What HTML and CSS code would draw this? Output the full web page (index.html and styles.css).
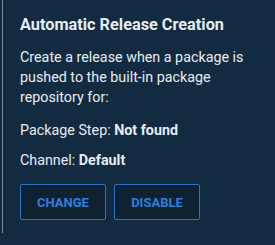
FILE: index.html
```html
<!DOCTYPE html>
<html>
    <head>
        <title>Automatic Release Creation</title>
        <link rel="stylesheet" href="styles.css">
    </head>
    <body>
        <div class="panel">
            <h3 class="title">Automatic Release Creation</h3>
            <p class="intro">Create a release when a package is pushed to the built-in package repository for:</p>
            <p>Package Step: <strong>Not found</strong></p>
            <p class="last">Channel: <strong>Default</strong></p>
            <div class="actions">
                <button class="button">Change</button>
                <button class="button">Disable</button>
            </div>
        </div>
    </body>
</html>
```

FILE: styles.css
```css
html, body {
    margin: 0;
    background: #132b40;
}
body {
    font-family: Roboto, "Liberation Sans", sans-serif;
    color: #e6edf3;
    font-size: 14.3px;
    line-height: 20px;
    padding-left: 2px;
}
.panel {
    border-left: 1px solid #7a8896;
    height: 233px;
    box-sizing: border-box;
    padding: 13px 8px 0 17px;
    width: 262px;
}
.title {
    font-size: 16.3px;
    font-weight: bold;
    line-height: 24px;
    margin: 0 0 10px;
}
p {
    margin: 0 0 10px;
}
.intro {
    margin-bottom: 13px;
}
.last {
    margin-bottom: 14px;
}
strong {
    font-weight: bold;
}
.actions {
    display: flex;
    gap: 8px;
}
.button {
    width: 86px;
    height: 36px;
    background: #0f2232;
    border: 1px solid #2a73c8;
    border-radius: 2px;
    color: #2f80dc;
    font-family: Roboto, "Liberation Sans", sans-serif;
    font-size: 13px;
    font-weight: bold;
    text-transform: uppercase;
    padding: 0;
}
```
